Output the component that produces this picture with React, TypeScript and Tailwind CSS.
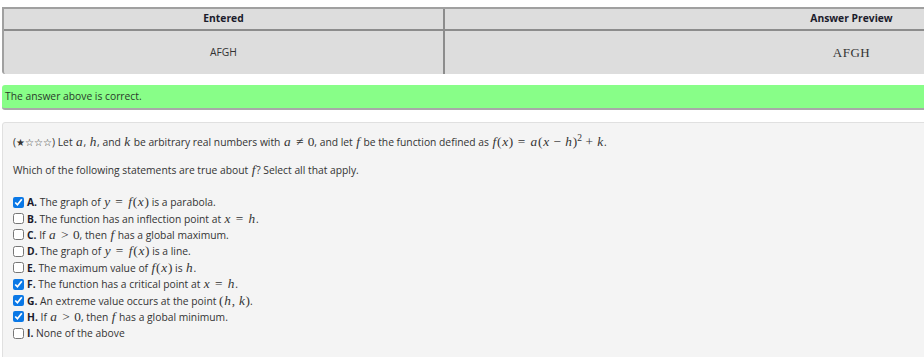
import React from "react";

const SERIF = '"Liberation Serif", "DejaVu Serif", serif';

const I = ({ children }: { children: React.ReactNode }) => (
  <span className="italic text-[13.3px] leading-[10px] mx-[0.8px]" style={{ fontFamily: SERIF }}>{children}</span>
);
const R = ({ children }: { children: React.ReactNode }) => (
  <span className="text-[13.3px] leading-[10px]" style={{ fontFamily: SERIF }}>{children}</span>
);
const Rel = ({ children }: { children: React.ReactNode }) => (
  <span className="text-[13.3px] leading-[10px] mx-[4.5px]" style={{ fontFamily: SERIF }}>{children}</span>
);
const Bin = ({ children }: { children: React.ReactNode }) => (
  <span className="text-[13.3px] leading-[10px] mx-[3.5px]" style={{ fontFamily: SERIF }}>{children}</span>
);

type Opt = { k: string; checked: boolean; body: React.ReactNode };

const opts: Opt[] = [
  { k: "A", checked: true, body: <>The graph of <I>y</I><Rel>=</Rel><I>f</I><R>(</R><I>x</I><R>)</R> is a parabola.</> },
  { k: "B", checked: false, body: <>The function has an inflection point at <I>x</I><Rel>=</Rel><I>h</I>.</> },
  { k: "C", checked: false, body: <>If <I>a</I><Rel>&gt;</Rel><R>0</R>, then <I>f</I> has a global maximum.</> },
  { k: "D", checked: false, body: <>The graph of <I>y</I><Rel>=</Rel><I>f</I><R>(</R><I>x</I><R>)</R> is a line.</> },
  { k: "E", checked: false, body: <>The maximum value of <I>f</I><R>(</R><I>x</I><R>)</R> is <I>h</I>.</> },
  { k: "F", checked: true, body: <>The function has a critical point at <I>x</I><Rel>=</Rel><I>h</I>.</> },
  { k: "G", checked: true, body: <>An extreme value occurs at the point <R>(</R><I>h</I><R>,</R><span className="mx-[1.5px]" /><I>k</I><R>)</R>.</> },
  { k: "H", checked: true, body: <>If <I>a</I><Rel>&gt;</Rel><R>0</R>, then <I>f</I> has a global minimum.</> },
  { k: "I", checked: false, body: <>None of the above</> },
];

export default function App() {
  return (
    <div
      className="w-[924px] h-[357px] overflow-hidden bg-white text-[#333] text-[10.3px]"
      style={{ fontFamily: '"Open Sans", "Noto Sans", sans-serif' }}
    >
      <div className="pt-[7px] pl-[2px]">
        <div className="w-[1256px] border-t-2 border-l-2 border-[#a0a0a0] rounded-bl-[3px] bg-[#dddddd]">
          <div className="grid grid-cols-[441px_813px] border-b-2 border-[#8c8c8c]">
            <div className="h-[20px] flex items-center justify-center font-bold text-[#1b1b2b] border-r-2 border-[#8c8c8c]">Entered</div>
            <div className="h-[20px] flex items-center justify-center font-bold text-[#1b1b2b]">Answer Preview</div>
          </div>
          <div className="grid grid-cols-[441px_813px]">
            <div className="h-[43px] flex items-center justify-center border-r-2 border-[#8c8c8c]">AFGH</div>
            <div className="h-[43px] flex items-center justify-center text-[13px] tracking-[0.5px]" style={{ fontFamily: SERIF }}>AFGH</div>
          </div>
        </div>
      </div>

      <div className="mt-[11px] ml-[2px] w-[1000px] h-[25px] bg-[#88fe88] rounded-l-[3px] border-b-2 border-[#a8a8a8] flex items-center pl-[3px] text-[#2a3a2a]">
        The answer above is correct.
      </div>

      <div className="mt-[12px] ml-[2px] w-[1000px] h-[300px] bg-[#f4f4f4] border border-[#e0e0e0] rounded-[3px] pl-[10px] pt-[11px]">
        <div className="leading-[16px]">
          (★☆☆☆) Let <I>a</I>, <I>h</I>, and <I>k</I> be arbitrary real numbers with <I>a</I><Rel>≠</Rel><R>0</R>, and let <I>f</I> be the function defined as <I>f</I><R>(</R><I>x</I><R>)</R><Rel>=</Rel><I>a</I><R>(</R><I>x</I><Bin>−</Bin><I>h</I><R>)</R><sup className="text-[9.5px]" style={{ fontFamily: SERIF }}>2</sup><Bin>+</Bin><I>k</I>.
        </div>
        <div className="mt-[12px] leading-[16px]">
          Which of the following statements are true about <I>f</I>? Select all that apply.
        </div>
        <div className="mt-[16px] flex flex-col">
          {opts.map((o) => (
            <label key={o.k} className="flex items-center h-[16.4px] leading-[16px]">
              <input
                type="checkbox"
                defaultChecked={o.checked}
                className="w-[11px] h-[11px] m-0 mr-[3px] accent-[#0a78e6]"
              />
              <span>
                <b className="text-[#1b1b2b]">{o.k}.</b> {o.body}
              </span>
            </label>
          ))}
        </div>
      </div>
    </div>
  );
}
